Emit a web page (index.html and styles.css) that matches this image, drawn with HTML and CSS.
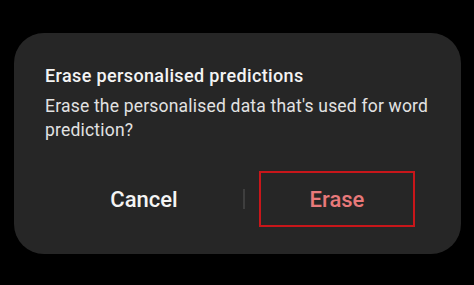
FILE: index.html
```html
<!DOCTYPE html>
<html>
<head>
<meta charset="utf-8">
<link rel="stylesheet" href="styles.css">
</head>
<body>
<div class="dialog">
  <div class="title">Erase personalised predictions</div>
  <div class="message">Erase the personalised data that's used for word prediction?</div>
  <div class="actions">
    <div class="btn cancel">Cancel</div>
    <div class="divider"></div>
    <div class="btn erase">Erase</div>
  </div>
</div>
</body>
</html>
```
FILE: styles.css
```css
html, body {
  margin: 0;
  padding: 0;
  background: #000;
  width: 474px;
  height: 285px;
  overflow: hidden;
  font-family: Roboto, "Liberation Sans", sans-serif;
}
.dialog {
  margin: 33px 0 0 14px;
  width: 447px;
  height: 221px;
  box-sizing: border-box;
  padding: 32px 46px 0 31px;
  background: #262626;
  border-radius: 30px;
}
.title {
  font-size: 18px;
  letter-spacing: 0.37px;
  line-height: 22px;
  font-weight: 500;
  color: #f4f4f4;
}
.message {
  margin-top: 7px;
  font-size: 17.5px;
  letter-spacing: 0.2px;
  line-height: 24px;
  color: #e2e2e2;
  width: 410px;
}
.actions {
  margin-top: 29px;
  display: grid;
  grid-template-columns: 1fr 2px 170px;
  align-items: center;
  height: 56px;
}
.btn {
  font-size: 22px;
  font-weight: 500;
  display: flex;
  align-items: center;
  justify-content: center;
  height: 56px;
  box-sizing: border-box;
}
.cancel {
  color: #f4f4f4;
}
.divider {
  width: 2px;
  height: 20px;
  background: #3e3e3e;
}
.erase {
  margin-left: 14px;
  color: #e8797a;
  border: 2.5px solid #c8161a;
}
```
